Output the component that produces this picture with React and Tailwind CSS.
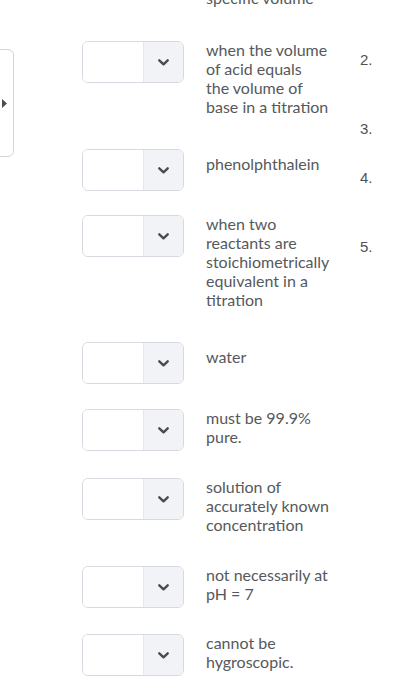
import React from "react";

const rows = [
  { lines: ["when the volume", "of acid equals", "the volume of", "base in a titration"], h: "h-[108px]", single: false },
  { lines: ["phenolphthalein"], h: "h-[66px]", single: true },
  { lines: ["when two", "reactants are", "stoichiometrically", "equivalent in a", "titration"], h: "h-[127px]", single: false },
  { lines: ["water"], h: "h-[67px]", single: true },
  { lines: ["must be 99.9%", "pure."], h: "h-[69px]", single: false },
  { lines: ["solution of", "accurately known", "concentration"], h: "h-[88px]", single: false },
  { lines: ["not necessarily at", "pH = 7"], h: "h-[68px]", single: false },
  { lines: ["cannot be", "hygroscopic."], h: "h-[68px]", single: false },
];

function Select() {
  return (
    <div className="flex h-[42px] w-[102px] shrink-0 overflow-hidden rounded-[6px] border border-[#d6d9df] bg-white">
      <div className="w-[60px] bg-white" />
      <div className="flex flex-1 items-center justify-center border-l border-[#e6e8ec] bg-[#f2f3f6]">
        <svg width="11" height="7" viewBox="0 0 11 7">
          <path d="M1.3 1.3 L5.5 5.3 L9.7 1.3" fill="none" stroke="#494c4e" strokeWidth="2.4" strokeLinecap="round" strokeLinejoin="round" />
        </svg>
      </div>
    </div>
  );
}

export default function App() {
  const textFont = { fontFamily: "Lato, 'Open Sans', sans-serif" };
  return (
    <div className="relative h-[700px] w-[420px] overflow-hidden bg-white">
      <div className="flex">
        {/* left collapsed panel */}
        <div className="w-[14px] shrink-0 pt-[49px]">
          <div className="ml-[-6px] flex h-[108px] w-[20px] items-center justify-end rounded-r-[6px] border border-[#d3d5d9] bg-white pr-[6px]">
            <svg width="5" height="9" viewBox="0 0 5 9">
              <path d="M0 0 L5 4.5 L0 9 Z" fill="#4a4d50" />
            </svg>
          </div>
        </div>

        {/* main column */}
        <div className="ml-[68px] flex w-[256px] shrink-0 flex-col" style={textFont}>
          <div className="mt-[-12px] h-[53px] pl-[124px] text-[16px] leading-[19px] text-[#56595c]">
            specific volume
          </div>
          {rows.map((r, i) => (
            <div key={i} className={`flex items-start ${r.h}`}>
              <Select />
              <div
                className={`ml-[22px] w-[132px] whitespace-nowrap text-[16px] leading-[19px] text-[#56595c] ${
                  r.single ? "mt-[5px]" : "mt-[-1px]"
                }`}
              >
                {r.lines.map((l, j) => (
                  <div key={j}>{l}</div>
                ))}
              </div>
            </div>
          ))}
        </div>

        {/* numbers column */}
        <div
          className="ml-[22px] flex flex-col text-[15px] leading-[20px] text-[#4f5254]"
          style={{ fontFamily: "'Liberation Sans', Arial, sans-serif" }}
        >
          <div className="mt-[50px]">2.</div>
          <div className="mt-[49px]">3.</div>
          <div className="mt-[29px]">4.</div>
          <div className="mt-[49px]">5.</div>
        </div>
      </div>
    </div>
  );
}
